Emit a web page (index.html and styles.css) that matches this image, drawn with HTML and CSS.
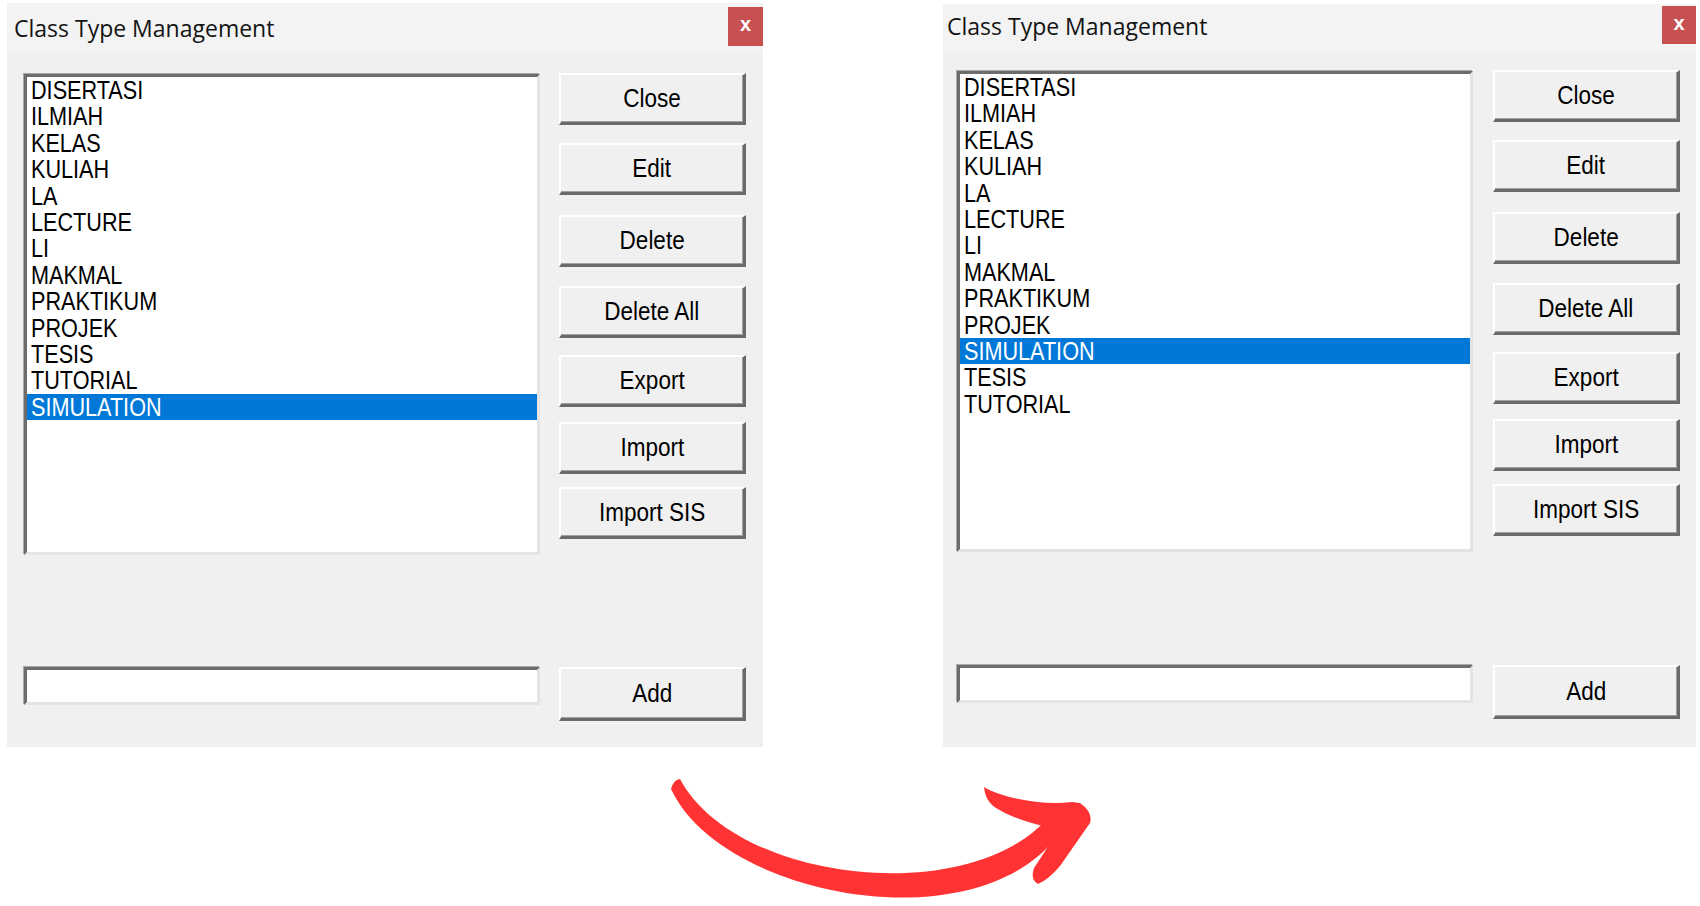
FILE: index.html
```html
<!DOCTYPE html>
<html lang="en">
<head>
<meta charset="utf-8">
<title>Class Type Management</title>
<link rel="stylesheet" href="styles.css">
</head>
<body>
<div class="page">
  <div class="dialogs">
    <section class="dialog dialog--before">
      <header class="titlebar">
        <span class="title">Class Type Management</span>
        <span class="close-box">x</span>
      </header>
      <div class="body">
        <ul class="listbox">
          <li><span class="t">DISERTASI</span></li>
          <li><span class="t">ILMIAH</span></li>
          <li><span class="t">KELAS</span></li>
          <li><span class="t">KULIAH</span></li>
          <li><span class="t">LA</span></li>
          <li><span class="t">LECTURE</span></li>
          <li><span class="t">LI</span></li>
          <li><span class="t">MAKMAL</span></li>
          <li><span class="t">PRAKTIKUM</span></li>
          <li><span class="t">PROJEK</span></li>
          <li><span class="t">TESIS</span></li>
          <li><span class="t">TUTORIAL</span></li>
          <li class="selected"><span class="t">SIMULATION</span></li>
        </ul>
        <div class="buttons">
          <button class="btn"><span class="t">Close</span></button>
          <button class="btn"><span class="t">Edit</span></button>
          <button class="btn"><span class="t">Delete</span></button>
          <button class="btn"><span class="t">Delete All</span></button>
          <button class="btn"><span class="t">Export</span></button>
          <button class="btn"><span class="t">Import</span></button>
          <button class="btn"><span class="t">Import SIS</span></button>
        </div>
        <div class="textbox"></div>
        <button class="btn btn--add"><span class="t">Add</span></button>
      </div>
    </section>

    <section class="dialog dialog--after">
      <header class="titlebar">
        <span class="title">Class Type Management</span>
        <span class="close-box">x</span>
      </header>
      <div class="body">
        <ul class="listbox">
          <li><span class="t">DISERTASI</span></li>
          <li><span class="t">ILMIAH</span></li>
          <li><span class="t">KELAS</span></li>
          <li><span class="t">KULIAH</span></li>
          <li><span class="t">LA</span></li>
          <li><span class="t">LECTURE</span></li>
          <li><span class="t">LI</span></li>
          <li><span class="t">MAKMAL</span></li>
          <li><span class="t">PRAKTIKUM</span></li>
          <li><span class="t">PROJEK</span></li>
          <li class="selected"><span class="t">SIMULATION</span></li>
          <li><span class="t">TESIS</span></li>
          <li><span class="t">TUTORIAL</span></li>
        </ul>
        <div class="buttons">
          <button class="btn"><span class="t">Close</span></button>
          <button class="btn"><span class="t">Edit</span></button>
          <button class="btn"><span class="t">Delete</span></button>
          <button class="btn"><span class="t">Delete All</span></button>
          <button class="btn"><span class="t">Export</span></button>
          <button class="btn"><span class="t">Import</span></button>
          <button class="btn"><span class="t">Import SIS</span></button>
        </div>
        <div class="textbox"></div>
        <button class="btn btn--add"><span class="t">Add</span></button>
      </div>
    </section>
  </div>

  <svg class="arrow" width="480" height="156" viewBox="640 750 480 156" xmlns="http://www.w3.org/2000/svg" aria-hidden="true">
    <path class="arrow-shape" d="M671,789 C720,895 970,945 1056,838 L1046,820 C965,908 735,882 680,779 Q674,779 671,789 Z"/>
    <path class="arrow-shape" d="M984,787 C1000,797 1040,806 1072,802 L1080,803 Q1093,812 1090,823 L1060,866 Q1048,880 1038,884 Q1030,880 1034,868 L1055,836 L1043,826 Q1010,818 993,806 Q985,799 984,787 Z"/>
  </svg>
</div>
</body>
</html>
```

FILE: styles.css
```css
html, body {
  margin: 0;
  padding: 0;
  background: #ffffff;
}

.page {
  width: 1700px;
  height: 906px;
  padding-top: 3px;
  box-sizing: border-box;
  overflow: hidden;
}

.dialogs {
  display: flex;
  align-items: flex-start;
}

.dialog {
  display: flex;
  flex-direction: column;
  background: #f0f0f0;
  box-sizing: border-box;
}

.dialog--before {
  margin-left: 7px;
  width: 756px;
  height: 744px;
}

.dialog--after {
  margin-left: 180px;
  margin-top: 1px;
  width: 753px;
  height: 743px;
}

/* Title bar */
.titlebar {
  height: 50px;
  background: #f3f3f3;
  display: flex;
  justify-content: space-between;
  align-items: flex-start;
  flex: none;
}

.title {
  font-family: "Open Sans", "Noto Sans", sans-serif;
  font-size: 23px;
  line-height: 31px;
  color: #141414;
  padding-top: 10px;
  padding-left: 7px;
}

.dialog--after .title {
  padding-top: 7px;
  padding-left: 4px;
}

.close-box {
  width: 35px;
  height: 39px;
  margin-top: 4px;
  background: #c75050;
  color: #ffffff;
  font-family: "Liberation Sans", Arial, sans-serif;
  font-weight: bold;
  font-size: 20px;
  line-height: 35px;
  text-align: center;
}

.dialog--after .close-box {
  width: 34px;
  height: 38px;
  margin-top: 2px;
}

/* Body */
.body {
  display: grid;
  grid-template-columns: 516px 187px;
  column-gap: 19px;
  row-gap: 112px;
  align-items: start;
  padding: 20px 0 26px 17px;
}

.dialog--after .body {
  column-gap: 20px;
  row-gap: 113px;
  padding: 16px 0 28px 14px;
}

.t {
  display: inline-block;
  white-space: nowrap;
}

/* List box */
.listbox {
  list-style: none;
  margin: 1px 0 0 0;
  padding: 0;
  height: 481px;
  box-sizing: border-box;
  background: #ffffff;
  border-style: solid;
  border-width: 3px;
  border-color: #6c6c6c #e4e4e4 #e4e4e4 #6c6c6c;
  box-shadow: -1px -1px 0 #a8a8a8;
  overflow: hidden;
  font-family: "Liberation Sans", Arial, sans-serif;
  font-size: 25px;
  color: #000000;
}

.listbox li {
  height: 26.4px;
  line-height: 26.4px;
  padding-left: 4px;
}

.listbox .t {
  transform: scaleX(0.865);
  transform-origin: left center;
}

.listbox li.selected {
  background: #0078d7;
  color: #ffffff;
}

/* Buttons */
.buttons {
  display: flex;
  flex-direction: column;
}

.buttons .btn:nth-child(2) { margin-top: 18px; }
.buttons .btn:nth-child(3) { margin-top: 20px; }
.buttons .btn:nth-child(4) { margin-top: 19px; }
.buttons .btn:nth-child(5) { margin-top: 17px; }
.buttons .btn:nth-child(6) { margin-top: 15px; }
.buttons .btn:nth-child(7) { margin-top: 13px; }

.btn {
  width: 187px;
  height: 52px;
  margin: 0;
  padding: 0;
  box-sizing: border-box;
  background: #f0f0f0;
  border-style: solid;
  border-width: 2px 3px 3px 2px;
  border-color: #ffffff #6a6a6a #6a6a6a #ffffff;
  box-shadow: inset -1px -1px 0 #a0a0a0;
  font-family: "Liberation Sans", Arial, sans-serif;
  font-size: 25px;
  color: #000000;
  text-align: center;
  line-height: 1;
}

.btn .t {
  transform: scaleX(0.9);
  transform-origin: center center;
}

.btn--add {
  height: 54px;
}

/* Text field */
.textbox {
  height: 38px;
  box-sizing: border-box;
  background: #ffffff;
  border-style: solid;
  border-width: 3px;
  border-color: #6c6c6c #e4e4e4 #e4e4e4 #6c6c6c;
  box-shadow: -1px -1px 0 #a8a8a8;
}

/* Annotation arrow */
.arrow {
  display: block;
  margin-left: 640px;
  margin-top: 3px;
}

.arrow-shape {
  fill: #ff3333;
}
```
